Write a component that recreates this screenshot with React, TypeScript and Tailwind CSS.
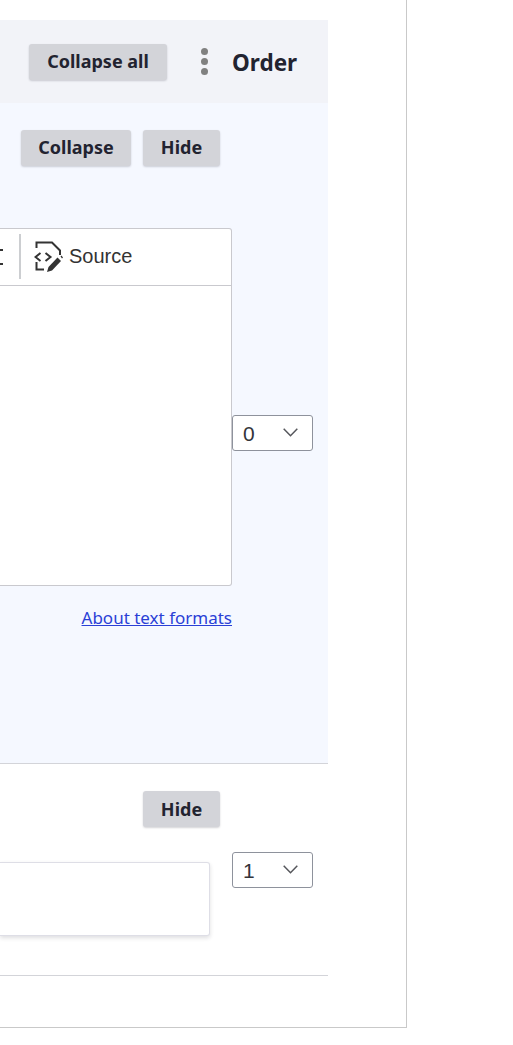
const buttonClass =
	"h-9 rounded-[3px] bg-[#d3d4d9] text-[18px] font-bold text-[#222330] shadow-[0_1px_2px_rgba(34,35,48,0.2)]";

const OrderSelect = ({ value }: { value: string }) => (
	<div className="flex h-9 w-[81px] shrink-0 items-center justify-between rounded-[3px] border border-[#8e929c] bg-white pl-[10px] pr-[14px] font-['Liberation_Sans',sans-serif] text-[21px] text-[#33343a]">
		<span className="pt-[2px]">{value}</span>
		<svg width="15" height="9" viewBox="0 0 15 9" fill="none" className="mb-px">
			<path d="M0.7 0.7L7.500 7.700L14.300 0.700" stroke="#55565b" strokeWidth="1.500" />
		</svg>
	</div>
);

const SourceIcon = () => (
	<svg width="29" height="31" viewBox="0 0 29 31" fill="none" className="shrink-0">
		<path d="M2.500 7V1.500H18L26 9.500V14M2.500 21V28.500H10" stroke="#333" strokeWidth="2" />
		<path d="M6.500 12L1.500 16L6.500 20M11.500 12L16.500 16L11.500 20" stroke="#333" strokeWidth="2" />
		<path d="M13 31L14.500 26L23.500 16.500L27 20L18 29.500Z" fill="#333" />
		<path d="M26.500 15.500L27.500 14.500L29 16.500L28 17.500Z" fill="#333" />
	</svg>
);

export default function App() {
	return (
		<div className="h-[1028px] w-[407px] border-r border-b border-[#c9c9c9] bg-white pt-5 font-['Noto_Sans',sans-serif]">
			<div className="w-[328px]">
				<div className="flex h-[83px] items-center justify-end bg-[#f2f3f8] pr-[31px]">
					<button className={`${buttonClass} w-[138px]`}>Collapse all</button>
					<div className="ml-[34px] mr-[24px] flex flex-col gap-[3px]">
						<span className="h-[7px] w-[7px] rounded-full bg-[#808080]" />
						<span className="h-[7px] w-[7px] rounded-full bg-[#808080]" />
						<span className="h-[7px] w-[7px] rounded-full bg-[#808080]" />
					</div>
					<span className="w-[65px] whitespace-nowrap pt-[3px] text-[22.500px] font-bold text-[#222330]">
						Order
					</span>
				</div>

				<div className="h-[661px] border-b border-[#d3d4d9] bg-[#f5f8ff] pt-[27px]">
					<div className="flex justify-end gap-3 pr-[108px]">
						<button className={`${buttonClass} w-[110px] pb-px`}>Collapse</button>
						<button className={`${buttonClass} w-[77px] pb-px`}>Hide</button>
					</div>

					<div className="mt-[62px] flex items-start">
						<div className="w-[232px]">
							<div className="h-[358px] rounded-r-[3px] border border-l-0 border-[#c9c9ce] bg-white">
								<div className="flex h-[57px] items-center border-b border-[#c9c9ce] pb-px">
									<div className="flex h-4 w-[3px] flex-col justify-between">
										<span className="h-[2px] bg-[#333]" />
										<span className="h-[2px] bg-[#333]" />
									</div>
									<span className="ml-4 h-[45px] w-[2px] bg-[#ccced1]" />
									<div className="ml-[13px] flex items-center gap-[6px]">
										<SourceIcon />
										<span className="pb-[2px] font-['Liberation_Sans',sans-serif] text-[20px] text-[#333]">
											Source
										</span>
									</div>
								</div>
							</div>
							<div className="mt-5 text-right text-[17px] leading-[23px] text-[#2a3fd6] underline">
								About text formats
							</div>
						</div>
						<div className="mt-[187px]">
							<OrderSelect value="0" />
						</div>
					</div>
				</div>

				<div className="h-[212px] border-b border-[#d3d4d9]">
					<div className="flex justify-end pt-[27px] pr-[108px]">
						<button className={`${buttonClass} w-[77px]`}>Hide</button>
					</div>
					<div className="mt-[25px] flex items-start">
						<div className="mr-[22px] mt-[10px] h-[74px] w-[210px] rounded-r-[3px] border border-l-0 border-[#dedee6] bg-white shadow-[0_2px_4px_rgba(34,35,48,0.15)]" />
						<OrderSelect value="1" />
					</div>
				</div>
			</div>
		</div>
	);
}
